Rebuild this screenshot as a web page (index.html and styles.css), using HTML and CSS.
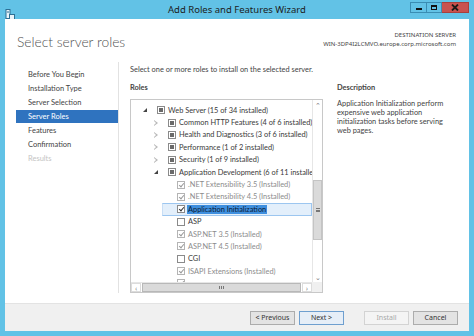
FILE: index.html
```html
<!DOCTYPE html>
<html lang="en">
<head>
    <meta charset="UTF-8">
    <title>Add Roles and Features Wizard</title>
    <link rel="stylesheet" href="styles.css">
</head>
<body>
<div class="window">
    <div class="titlebar">
        <span class="app-icon">
            <svg width="10" height="11" viewBox="0 0 10 11">
                <rect x="1" y="0.5" width="4" height="9" fill="#e9f4fa" stroke="#2d6f94"/>
                <rect x="4.5" y="5.5" width="5" height="5" fill="#e9f4fa" stroke="#2d6f94"/>
                <line x1="2" y1="3" x2="4" y2="3" stroke="#2d6f94"/>
            </svg>
        </span>
        <span class="title">Add Roles and Features Wizard</span>
        <div class="controls">
            <span class="ctl min"><i></i></span>
            <span class="ctl max"><i></i></span>
            <span class="ctl close">
                <svg width="8" height="7" viewBox="0 0 8 7"><path d="M1 0.5 L7 6.5 M7 0.5 L1 6.5" stroke="#1a1a1a" stroke-width="1.8"/></svg>
            </span>
        </div>
    </div>
    <div class="client">
        <div class="header">
            <h1>Select server roles</h1>
            <div class="dest">
                <div>DESTINATION SERVER</div>
                <div>WIN-3DP4I2LCMVO.europe.corp.microsoft.com</div>
            </div>
        </div>
        <div class="main">
            <ul class="nav">
                <li>Before You Begin</li>
                <li>Installation Type</li>
                <li>Server Selection</li>
                <li class="active">Server Roles</li>
                <li>Features</li>
                <li>Confirmation</li>
                <li class="disabled">Results</li>
            </ul>
            <div class="content">
                <div class="roles-col">
                    <p class="intro">Select one or more roles to install on the selected server.</p>
                    <div class="label">Roles</div>
                    <div class="listbox">
                        <div class="tree">
                            <div class="row l1"><span class="arrow open"></span><span class="box part"></span><span class="txt">Web Server (15 of 34 installed)</span></div>
                            <div class="row l2"><span class="arrow closed"></span><span class="box part"></span><span class="txt">Common HTTP Features (4 of 6 installed)</span></div>
                            <div class="row l2"><span class="arrow closed"></span><span class="box part"></span><span class="txt">Health and Diagnostics (3 of 6 installed)</span></div>
                            <div class="row l2"><span class="arrow closed"></span><span class="box part"></span><span class="txt">Performance (1 of 2 installed)</span></div>
                            <div class="row l2"><span class="arrow closed"></span><span class="box part"></span><span class="txt">Security (1 of 9 installed)</span></div>
                            <div class="row l2"><span class="arrow open"></span><span class="box part"></span><span class="txt">Application Development (6 of 11 installed)</span></div>
                            <div class="row l3 installed"><span class="arrow"></span><span class="box checked"></span><span class="txt">.NET Extensibility 3.5 (Installed)</span></div>
                            <div class="row l3 installed"><span class="arrow"></span><span class="box checked"></span><span class="txt">.NET Extensibility 4.5 (Installed)</span></div>
                            <div class="row l3 selected"><span class="arrow"></span><span class="box checked"></span><span class="txt">Application Initialization</span></div>
                            <div class="row l3"><span class="arrow"></span><span class="box"></span><span class="txt">ASP</span></div>
                            <div class="row l3 installed"><span class="arrow"></span><span class="box checked"></span><span class="txt">ASP.NET 3.5 (Installed)</span></div>
                            <div class="row l3 installed"><span class="arrow"></span><span class="box checked"></span><span class="txt">ASP.NET 4.5 (Installed)</span></div>
                            <div class="row l3"><span class="arrow"></span><span class="box"></span><span class="txt">CGI</span></div>
                            <div class="row l3 installed"><span class="arrow"></span><span class="box checked"></span><span class="txt">ISAPI Extensions (Installed)</span></div>
                            <div class="row l3 installed cut"><span class="arrow"></span><span class="box checked"></span></div>
                        </div>
                        <div class="vscroll">
                            <span class="sbtn">&#8963;</span>
                            <div class="vtrack"><div class="vthumb"><i></i></div></div>
                            <span class="sbtn">&#8964;</span>
                        </div>
                        <div class="hscroll">
                            <span class="sbtn">&lsaquo;</span>
                            <div class="htrack"><div class="hthumb"><i></i></div></div>
                            <span class="sbtn">&rsaquo;</span>
                        </div>
                        <div class="corner"></div>
                    </div>
                </div>
                <div class="desc-col">
                    <div class="label">Description</div>
                    <p class="desc">Application Initialization perform expensive web application initialization tasks before serving web pages.</p>
                </div>
            </div>
        </div>
        <div class="footer">
            <button class="btn">&lt; Previous</button>
            <button class="btn primary">Next &gt;</button>
            <button class="btn gap" disabled>Install</button>
            <button class="btn">Cancel</button>
        </div>
    </div>
</div>
</body>
</html>
```

FILE: styles.css
```css
*{
    margin:0;
    padding:0;
    box-sizing: border-box;
}
body{
    font-family: Lato, "Noto Sans", sans-serif;
    color: #333;
}
.window{
    width: 474px;
    height: 336px;
    background: #62c2e6;
    padding: 0 5px 5px 5px;
    display: flex;
    flex-direction: column;
}
.titlebar{
    height: 19px;
    display: grid;
    grid-template-columns: 1fr auto 1fr;
    align-items: start;
}
.app-icon{
    padding-top: 4px;
}
.title{
    font-family: "Noto Sans", sans-serif;
    font-size: 9.5px;
    line-height: 19px;
    color: #1c1c1c;
}
.controls{
    justify-self: end;
    display: flex;
    padding-top: 2px;
}
.ctl{
    height: 11px;
    display: flex;
    align-items: center;
    justify-content: center;
    border: 1px solid #3a8db3;
    border-left: none;
}
.ctl.min{
    width: 17px;
    border-left: 1px solid #3a8db3;
}
.ctl.min i{
    width: 6px;
    height: 2px;
    margin-top: 3px;
    background: #111;
}
.ctl.max{
    width: 15px;
}
.ctl.max i{
    width: 6px;
    height: 5px;
    border: 1px solid #111;
    border-top-width: 2px;
}
.ctl.close{
    width: 27px;
    background: #c9524f;
    border-color: #a9403d;
}
.client{
    flex: 1;
    background: #fff;
    display: flex;
    flex-direction: column;
    min-height: 0;
}
.header{
    height: 43px;
    display: flex;
    justify-content: space-between;
    padding: 12px 13px 0 12px;
}
.header h1{
    font-family: Lato, "Open Sans", sans-serif;
    font-weight: 300;
    font-size: 13.8px;
    color: #505050;
    line-height: 22px;
}
.dest{
    font-family: "Noto Sans", sans-serif;
    text-align: right;
    font-size: 6px;
    line-height: 9px;
    color: #444;
}
.main{
    flex: 1;
    min-height: 0;
    display: flex;
    padding-bottom: 10px;
}
.nav{
    list-style: none;
    width: 114px;
    padding: 6px 0 0 11px;
    border-right: 1px solid #e2e2e2;
}
.nav li{
    font-size: 7.5px;
    line-height: 14px;
    padding-left: 12px;
    color: #444;
}
.nav li.active{
    background: #2f73bf;
    color: #fff;
    height: 13px;
    line-height: 13px;
    margin: 0 0 1px 0;
}
.nav li.disabled{
    color: #c4c4c4;
}
.content{
    flex: 1;
    display: flex;
    padding: 3px 0 0 11px;
    gap: 14px;
}
.roles-col{
    width: 193px;
    display: flex;
    flex-direction: column;
    min-height: 0;
}
.intro{
    font-size: 7.4px;
    line-height: 10px;
    color: #444;
}
.label{
    font-size: 7.4px;
    font-weight: bold;
    color: #444;
    line-height: 10px;
    margin-top: 8px;
}
.listbox{
    margin-top: 6px;
    flex: 1;
    min-height: 0;
    border: 1px solid #c8c8c8;
    display: grid;
    grid-template-columns: minmax(0, 1fr) 10px;
    grid-template-rows: minmax(0, 1fr) 10px;
    overflow: hidden;
}
.tree{
    overflow: hidden;
    padding-top: 4px;
}
.row{
    height: 12.4px;
    display: flex;
    align-items: center;
    font-size: 7.4px;
    white-space: nowrap;
    color: #3a3a3a;
}
.row.l1{ padding-left: 11px; }
.row.l2{ padding-left: 22px; }
.row.l3{ padding-left: 31px; }
.row.installed{ color: #8c8c8c; }
.row.cut{ align-items: flex-start; padding-top: 2px; }
.row.selected{
    margin-left: 31px;
    padding-left: 0;
    background: #e3effb;
    border: 1px solid #9cc6f0;
    border-left-color: #c8def5;
}
.row.selected .arrow{ width: 14px; }
.row.selected .txt{
    background: #3f8fde;
    color: #0b1a33;
    padding: 0 1px;
    margin-left: -1px;
}
.arrow{
    width: 15px;
    height: 8px;
    flex: none;
    position: relative;
}
.arrow.open::before{
    content: "";
    position: absolute;
    left: 1px;
    top: 2px;
    border-left: 4px solid transparent;
    border-bottom: 4px solid #444;
}
.arrow.closed::before{
    content: "";
    position: absolute;
    left: 1px;
    top: 1px;
    width: 0;
    height: 0;
    border-top: 3px solid transparent;
    border-bottom: 3px solid transparent;
    border-left: 4px solid #b8b8b8;
}
.arrow.closed::after{
    content: "";
    position: absolute;
    left: 1px;
    top: 2px;
    border-top: 2px solid transparent;
    border-bottom: 2px solid transparent;
    border-left: 2px solid #fff;
}
.box{
    width: 8px;
    height: 8px;
    flex: none;
    border: 1px solid #8a8a8a;
    margin-right: 3px;
    background: #fff;
    position: relative;
}
.box.part::after{
    content: "";
    position: absolute;
    left: 1px;
    top: 1px;
    width: 4px;
    height: 4px;
    background: #6a6a6a;
}
.box.checked::after{
    content: "";
    position: absolute;
    left: 2px;
    top: 0;
    width: 2px;
    height: 4px;
    border-right: 1.2px solid #333;
    border-bottom: 1.2px solid #333;
    transform: rotate(40deg);
}
.installed .box{ border-color: #b4b4b4; }
.installed .box.checked::after{ border-color: #9a9a9a; }
.vscroll{
    background: #fff;
    border-left: 1px solid #e6e6e6;
    display: flex;
    flex-direction: column;
    min-height: 0;
}
.sbtn{
    flex: none;
    width: 9px;
    height: 10px;
    font-size: 7px;
    line-height: 10px;
    text-align: center;
    color: #777;
}
.vtrack{
    flex: 1;
    min-height: 0;
    padding: 70px 0 32px 0;
}
.vthumb{
    height: 100%;
    background: #dadada;
    border: 1px solid #c4c4c4;
    display: flex;
    align-items: center;
    justify-content: center;
}
.vthumb i{
    width: 4px;
    height: 4px;
    border-top: 1px solid #777;
    border-bottom: 1px solid #777;
    background: linear-gradient(#777, #777) center/100% 1px no-repeat;
}
.hscroll{
    display: flex;
    background: #fff;
    border-top: 1px solid #e6e6e6;
}
.hscroll .sbtn{
    width: 10px;
    height: 9px;
    line-height: 9px;
    font-size: 8px;
    border: 1px solid #dcdcdc;
}
.htrack{
    flex: 1;
    padding: 0 1px;
}
.hthumb{
    height: 100%;
    background: #dadada;
    border: 1px solid #b8b8b8;
    display: flex;
    align-items: center;
    justify-content: center;
}
.hthumb i{
    width: 5px;
    height: 3px;
    border-left: 1px solid #777;
    border-right: 1px solid #777;
    background: linear-gradient(#777, #777) center/1px 100% no-repeat;
}
.corner{
    background: #f0f0f0;
}
.desc-col{
    width: 116px;
    padding-top: 10px;
}
.desc{
    margin-top: 6px;
    font-size: 7.4px;
    line-height: 9px;
    color: #444;
}
.footer{
    height: 28px;
    flex: none;
    background: #f0f0f0;
    border-top: 1px solid #e3e3e3;
    display: flex;
    justify-content: flex-end;
    align-items: center;
    gap: 4px;
    padding: 0 11px 0 0;
}
.btn{
    width: 45px;
    height: 14px;
    font-family: "Noto Sans", sans-serif;
    font-size: 7px;
    color: #333;
    background: #e3e3e3;
    border: 1px solid #acacac;
}
.btn.primary{
    background: #e6eef7;
    border-color: #6e9fcf;
}
.btn.gap{
    margin-left: 16px;
}
.btn:disabled{
    background: #f4f4f4;
    border-color: #d3d3d3;
    color: #a8a8a8;
}
```
